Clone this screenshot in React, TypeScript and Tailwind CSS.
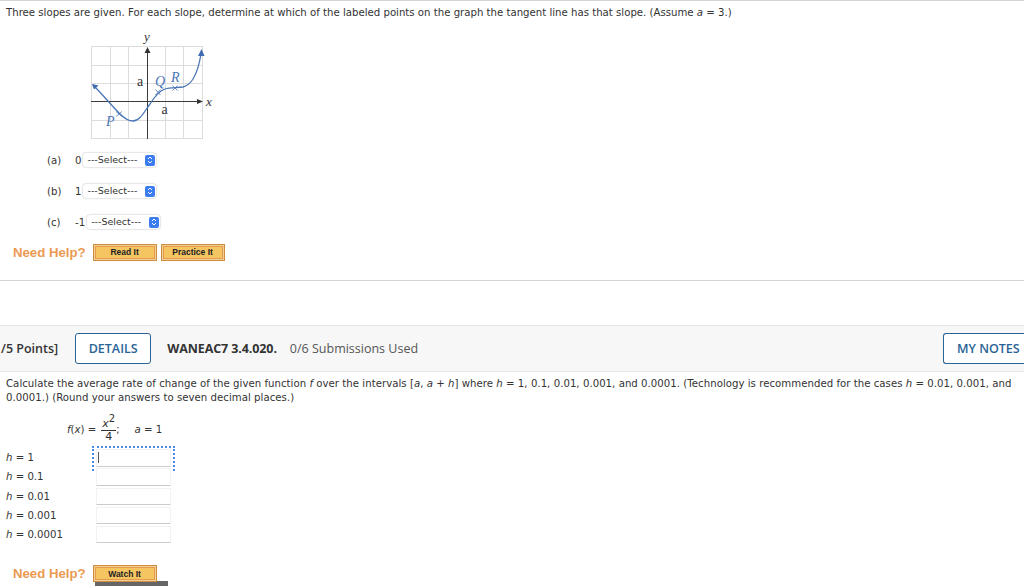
import React from 'react'

const Graph: React.FC = () => (
  <svg width="130" height="112" viewBox="85 30 130 112" className="block">
    {/* grid */}
    <g stroke="#dcdcdc" strokeWidth="1" fill="none">
      <rect x="91.500" y="46.500" width="111" height="92" />
      <path d="M110.500 46v92M128.500 46v92M165.500 46v92M183.500 46v92M91 65.500h111M91 83.500h111M91 120.500h111" />
    </g>
    {/* axes */}
    <path d="M91 101.500h108M147.500 50v89" stroke="#3a3a3a" strokeWidth="1" fill="none" />
    <path d="M147.500 47l-3 6h6zM203 101.500l-6-2.500v5z" fill="#333" />
    {/* curve */}
    <path
      d="M93 85C103 95 113 107 120 114C125 119 129 121 133 121C140 121 144 112 150 104C155 96 159 91 165 89C170 87 177 88 183 87C192 85 198 72 201 54"
      stroke="#4a76b5"
      strokeWidth="1.300"
      fill="none"
    />
    <path d="M92 84l6.500 1.500-4.500 4zM201.500 49l-3.500 7h6.500z" fill="#3f6cb0" />
    <path d="M116 111.500l6 5M122 111.500l-6 5M155.500 89.500l5 5.500M160.500 89.500l-5 5.500M172.500 85.500l5 5M177.500 85.500l-5 5" stroke="#4a76b5" strokeWidth="0.800" />
    <g fontFamily="'Liberation Serif', serif" fontStyle="italic" fontSize="13">
      <text x="144" y="41" fill="#333">y</text>
      <text x="206" y="106" fill="#333">x</text>
      <text x="106" y="126" fill="#4a76b5" fontSize="14">P</text>
      <text x="155" y="86" fill="#4a76b5" fontSize="14">Q</text>
      <text x="171" y="82" fill="#4a76b5" fontSize="14">R</text>
      <text x="137" y="86" fill="#333" fontStyle="normal" fontSize="14">a</text>
      <text x="161.500" y="114" fill="#333" fontStyle="normal" fontSize="14">a</text>
    </g>
  </svg>
)

const Select: React.FC = () => (
  <span className="ml-[2px] inline-flex h-[14px] w-[73px] items-center justify-between rounded-[3px] bg-white pl-[4px] pr-[1px] text-[9.500px] leading-none text-[#333] shadow-[0_0_2px_rgba(0,0,0,0.35)]">
    <span>---Select---</span>
    <span className="flex h-[11px] w-[10px] items-center justify-center rounded-[2px] bg-[#3b7df0]">
      <svg width="6" height="8" viewBox="0 0 6 8" fill="none" stroke="white" strokeWidth="1">
        <path d="M1 3l2-2 2 2M1 5l2 2 2-2" />
      </svg>
    </span>
  </span>
)

const HelpButton: React.FC<{ label: string }> = ({ label }) => (
  <span className="flex h-[17px] w-[64px] items-center justify-center border border-[#d08c3e] bg-[#f5c562] font-['Liberation_Sans',sans-serif] text-[8.500px] font-bold text-[#222] shadow-[inset_0_0_0_1px_#f3cf98,inset_0_0_0_2px_#e39c4c]">
    {label}
  </span>
)

const NeedHelp: React.FC<{ children: React.ReactNode }> = ({ children }) => (
  <div className="flex items-center gap-[7px] pl-[13px]">
    <span className="font-['Liberation_Sans',sans-serif] text-[13.200px] font-bold leading-none text-[#eb9a52]">
      Need Help?
    </span>
    <div className="flex gap-[4px]">{children}</div>
  </div>
)

const parts = [
  { tag: '(a)', slope: '0' },
  { tag: '(b)', slope: '1' },
  { tag: '(c)', slope: '-1' },
]

const hValues = ['1', '0.1', '0.01', '0.001', '0.0001']
const inputHeights = ['h-[18px]', 'h-[18px]', 'h-[17px]', 'h-[17px]', 'h-[17px]']

export default function App() {
  return (
    <div className="h-[586px] w-[1024px] overflow-hidden bg-white font-['DejaVu_Sans',sans-serif] text-[10.170px] text-[#333]">
      {/* First question */}
      <div className="h-[281px] border-y border-[#d4d4d4]">
        <p className="pl-[6px] pt-[5px] leading-[14px]">
          Three slopes are given. For each slope, determine at which of the labeled points on the graph the tangent line has that slope. (Assume <i>a</i> = 3.)
        </p>
        <div className="ml-[85px] mt-[10px]">
          <Graph />
        </div>
        <div className="mt-[11px] flex flex-col gap-[17px] pl-[47px]">
          {parts.map((part) => (
            <div className="flex h-[14px] items-center" key={part.tag}>
              <span className="w-[28px] pt-[1px]">{part.tag}</span>
              <span className="pt-[1px]">{part.slope}</span>
              <Select />
            </div>
          ))}
        </div>
        <div className="mt-[15px]">
          <NeedHelp>
            <HelpButton label="Read It" />
            <HelpButton label="Practice It" />
          </NeedHelp>
        </div>
      </div>

      {/* Second question */}
      <div className="mt-[44px] flex h-[47px] items-center justify-between border-y border-[#e6e6e6] bg-[#f7f7f7] font-['Open_Sans',sans-serif] text-[12.500px]">
        <div className="flex items-center">
          <span className="ml-[1px] pt-[2px] font-semibold">/5 Points]</span>
          <span className="ml-[17px] flex h-[31px] w-[76px] items-center justify-center rounded-[3px] border border-[#2a6496] bg-white pt-[2px] font-semibold text-[#2a6496]">
            DETAILS
          </span>
          <span className="ml-[16px] pt-[2px] font-bold tracking-[-0.100px]">WANEAC7 3.4.020.</span>
          <span className="ml-[13px] pt-[2px] text-[#555]">0/6 Submissions Used</span>
        </div>
        <span className="flex h-[31px] w-[81px] items-center justify-start rounded-l-[3px] border border-r-0 border-[#2a6496] bg-white pl-[13px] pt-[2px] font-semibold text-[#2a6496]">
          MY NOTES
        </span>
      </div>
      <p className="pl-[6px] pr-[8px] pt-[5px] leading-[14px] tracking-[0.030px]">
        Calculate the average rate of change of the given function <i>f</i> over the intervals [<i>a</i>, <i>a</i> + <i>h</i>] where <i>h</i> = 1, 0.1, 0.01, 0.001, and 0.0001. (Technology is recommended for the cases <i>h</i> = 0.01, 0.001, and 0.0001.) (Round your answers to seven decimal places.)
      </p>
      <div className="mt-[8px] flex h-[34px] items-center pl-[67px]">
        <span>
          <i>f</i>(<i>x</i>) =
        </span>
        <span className="ml-[5px] flex flex-col items-center text-[11px] leading-[12px]">
          <span className="border-b border-[#333] px-[1px]">
            <i>x</i>
            <sup className="text-[10px]">2</sup>
          </span>
          <span>4</span>
        </span>
        <span>;</span>
        <span className="ml-[15px]">
          <i>a</i> = 1
        </span>
      </div>
      <div className="relative mt-[2px] flex flex-col gap-[1.500px] pl-[6px]">
        <span className="absolute left-[92px] top-[-3px] h-[25px] w-[83px] border-2 border-dotted border-[#4a8be6]" />
        {hValues.map((h, i) => (
          <div className="relative flex h-[17.700px] items-center" key={h}>
            <span className="w-[90px]">
              <i>h</i> = {h}
            </span>
            <span className={`flex w-[75px] items-center border border-[#f2f2f2] border-b-[#cccccc] bg-white pl-[1px] ${inputHeights[i]}`}>
              {i === 0 && <span className="h-[11px] w-px bg-[#555]" />}
            </span>
          </div>
        ))}
      </div>
      <div className="mt-[22px]">
        <NeedHelp>
          <HelpButton label="Watch It" />
        </NeedHelp>
      </div>
      <div className="ml-[95px] -mt-[1px] h-[6px] w-[73px] bg-[#666]" />
    </div>
  )
}
